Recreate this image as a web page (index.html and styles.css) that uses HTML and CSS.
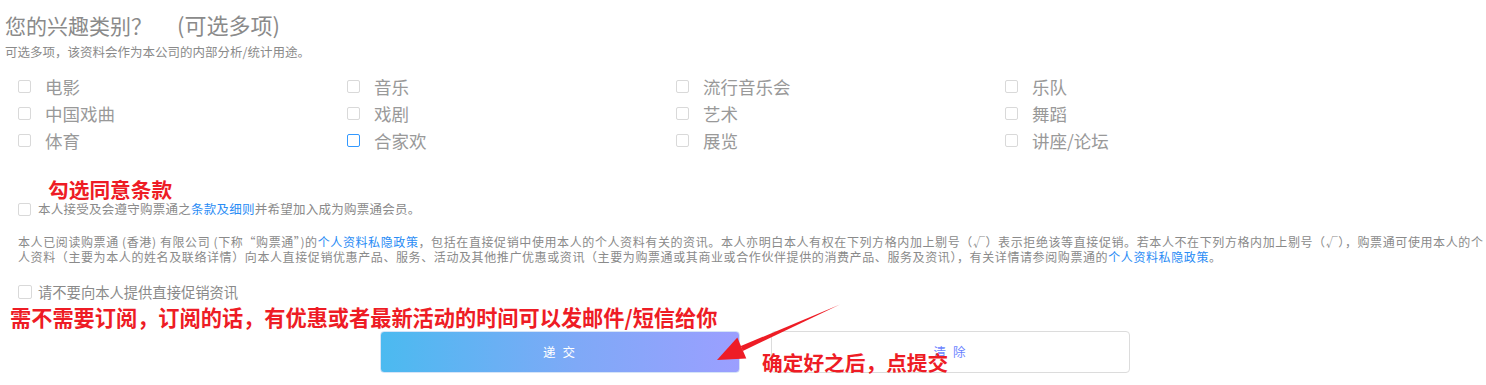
FILE: index.html
```html
<!DOCTYPE html>
<html lang="zh">
<head>
<meta charset="utf-8">
<title>兴趣类别</title>
<link rel="stylesheet" href="styles.css">
</head>
<body>
<div class="page">
  <h2 class="title">您的兴趣类别？<span class="title-note">(可选多项)</span></h2>
  <p class="subtitle">可选多项，该资料会作为本公司的内部分析/统计用途。</p>

  <div class="grid">
    <label class="opt"><span class="box"></span><span>电影</span></label>
    <label class="opt"><span class="box"></span><span>音乐</span></label>
    <label class="opt"><span class="box"></span><span>流行音乐会</span></label>
    <label class="opt"><span class="box"></span><span>乐队</span></label>
    <label class="opt"><span class="box"></span><span>中国戏曲</span></label>
    <label class="opt"><span class="box"></span><span>戏剧</span></label>
    <label class="opt"><span class="box"></span><span>艺术</span></label>
    <label class="opt"><span class="box"></span><span>舞蹈</span></label>
    <label class="opt"><span class="box"></span><span>体育</span></label>
    <label class="opt"><span class="box box-focus"></span><span>合家欢</span></label>
    <label class="opt"><span class="box"></span><span>展览</span></label>
    <label class="opt"><span class="box"></span><span>讲座/论坛</span></label>
  </div>

  <div class="note note-agree">勾选同意条款</div>

  <label class="small-row"><span class="box"></span><span>本人接受及会遵守购票通之<a class="link">条款及细则</a>并希望加入成为购票通会员。</span></label>

  <p class="para">本人已阅读购票通 (香港) 有限公司 (下称“购票通”)的<a class="link">个人资料私隐政策</a>，包括在直接促销中使用本人的个人资料有关的资讯。本人亦明白本人有权在下列方格内加上剔号（√）表示拒绝该等直接促销。若本人不在下列方格内加上剔号（√），购票通可使用本人的个人资料（主要为本人的姓名及联络详情）向本人直接促销优惠产品、服务、活动及其他推广优惠或资讯（主要为购票通或其商业或合作伙伴提供的消费产品、服务及资讯），有关详情请参阅购票通的<a class="link">个人资料私隐政策</a>。</p>

  <label class="small-row small-row-2"><span class="box box-lg"></span><span>请不要向本人提供直接促销资讯</span></label>

  <div class="note note-sub">需不需要订阅，订阅的话，有优惠或者最新活动的时间可以发邮件/短信给你</div>

  <div class="actions">
    <button class="btn btn-submit">递 交</button>
    <button class="btn btn-clear">清 除</button>
  </div>
</div>

<div class="note note-confirm">确定好之后，点提交</div>
<svg class="arrow" width="1486" height="385" viewBox="0 0 1486 385" aria-hidden="true">
  <polygon points="840,304.5 742.8,351 740.8,346" fill="#ee1c25"/>
  <polygon points="717,360 737.3,337.5 746.3,358.6" fill="#ee1c25"/>
</svg>
</body>
</html>
```

FILE: styles.css
```css
html, body {
  margin: 0;
  padding: 0;
  background: #ffffff;
}

body {
  position: relative;
  width: 1486px;
  height: 385px;
  overflow: hidden;
  font-family: "Noto Sans CJK SC", "Noto Sans", "Liberation Sans", sans-serif;
  color: #888888;
}

.page {
  display: flex;
  flex-direction: column;
  align-items: flex-start;
}

.title {
  margin: 10px 0 0 5px;
  font-size: 21px;
  line-height: 28px;
  font-weight: 400;
  color: #8a8a8a;
}

.title-note {
  margin-left: 25px;
  font-size: 22px;
}

.subtitle {
  margin: 5px 0 0 5px;
  font-size: 12.5px;
  line-height: 16px;
  color: #8a8a8a;
}

.grid {
  margin-top: 13px;
  padding-left: 18px;
  display: grid;
  grid-template-columns: repeat(4, 329px);
  grid-auto-rows: 27px;
}

.opt {
  display: flex;
  align-items: center;
  gap: 14px;
  font-size: 17.5px;
  color: #999999;
}

.box {
  box-sizing: border-box;
  width: 13px;
  height: 13px;
  border: 1px solid #d9d9d9;
  border-radius: 2px;
  background: #ffffff;
  flex: none;
}

.box.box-focus {
  border-color: #3399ff;
}

.box-lg {
  width: 14px;
  height: 14px;
}

.note {
  color: #ee1c25;
  font-weight: 700;
  font-size: 20.7px;
  white-space: nowrap;
}

.note-agree {
  margin: 24px 0 0 48px;
  line-height: 22px;
}

.small-row {
  margin: 1px 0 0 18px;
  display: flex;
  align-items: center;
  gap: 7px;
  font-size: 12.5px;
  letter-spacing: 0.25px;
  line-height: 16px;
  color: #8a8a8a;
}

.small-row-2 {
  margin-top: 19px;
  gap: 6px;
  font-size: 14.3px;
  letter-spacing: 0;
  line-height: 18px;
}

.link {
  color: #2a8cf5;
}

.para {
  margin: 16.5px 0 0 18px;
  width: 1468px;
  font-size: 12px;
  letter-spacing: 0.6px;
  line-height: 15px;
  color: #8a8a8a;
}

.note-sub {
  margin: 3px 0 0 10px;
  font-size: 21.2px;
  line-height: 26px;
}

.actions {
  margin: 1px 0 0 380px;
  display: flex;
  gap: 31px;
}

.btn {
  box-sizing: border-box;
  width: 360px;
  height: 42px;
  border-radius: 4px;
  font-family: "Noto Sans CJK SC", "Noto Sans", sans-serif;
  font-size: 12.5px;
  letter-spacing: 2px;
  cursor: pointer;
}

.btn-submit {
  border: 1px solid #d6e4f7;
  color: #ffffff;
  background: linear-gradient(90deg, #4bbaf0 0%, #7fa9f7 55%, #9b9fff 100%);
}

.btn-clear {
  width: 359px;
  border: 1px solid #dcdcdc;
  background: #ffffff;
  color: #6b84ff;
}

.note-confirm {
  position: absolute;
  left: 762px;
  top: 348px;
  line-height: 28px;
}

.arrow {
  position: absolute;
  left: 0;
  top: 0;
  pointer-events: none;
}
```
